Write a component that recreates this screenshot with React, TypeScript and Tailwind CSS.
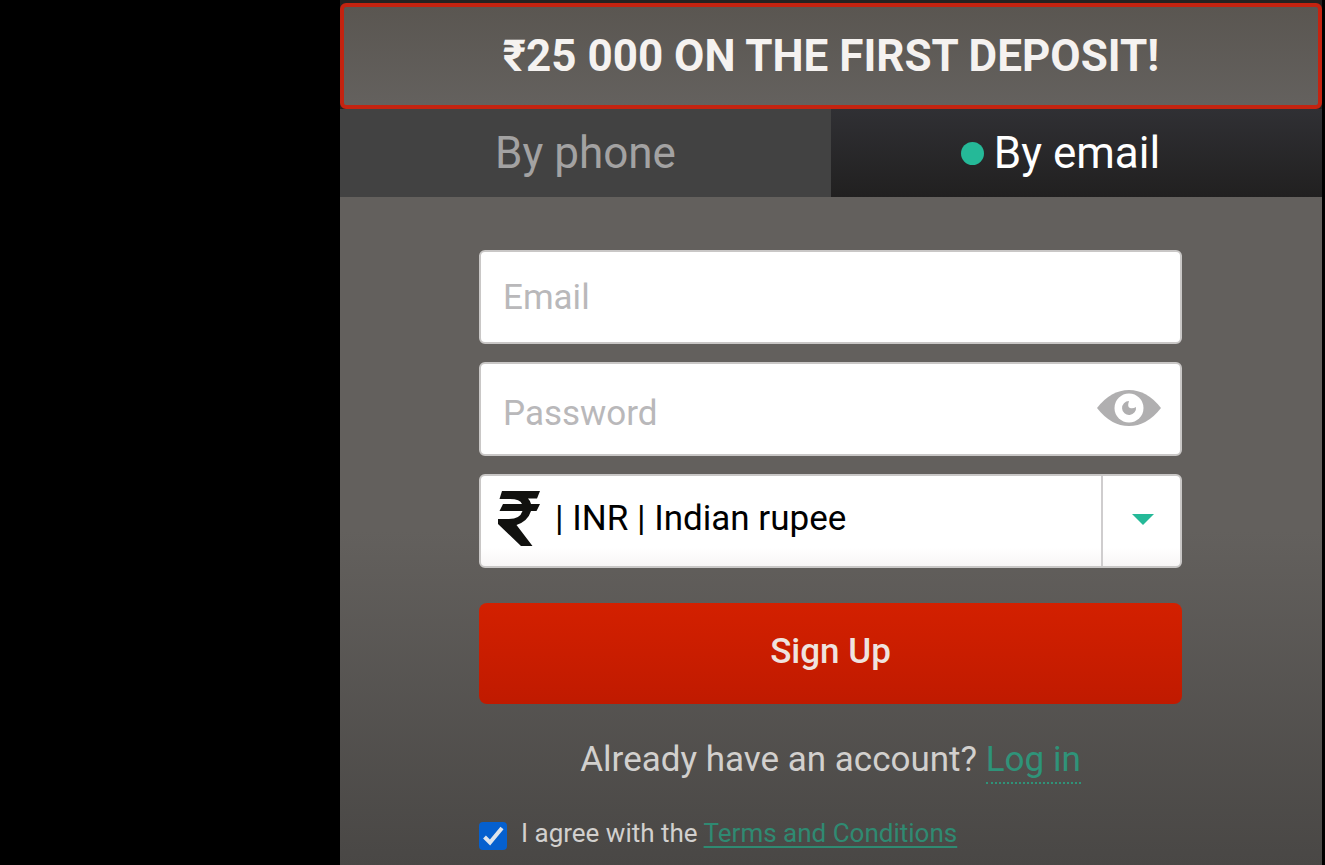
import { useState } from "react";

const fieldBox =
  "h-[94px] w-full rounded-md border-2 border-[#c9c7c6] bg-white text-[35px] text-black outline-none";

function RupeeIcon() {
  return (
    <svg viewBox="0 0 44 56" className="h-14 w-11" fill="#11110f" aria-hidden="true">
      <path d="M5 0H43L40 7.500H31Q33.500 10 34 13H43L39.500 20H34Q31 30 19.500 34L35.500 55H24L1 33V28H12Q23 28 25.500 20H2.500L6 13H25Q23 8 13 8H2.500Z" />
    </svg>
  );
}

function EyeIcon() {
  return (
    <svg viewBox="0 0 64 36" className="h-9 w-16" aria-hidden="true">
      <path d="M0 18Q14 0 32 0T64 18Q50 36 32 36T0 18Z" fill="#b0afb0" />
      <circle cx="32" cy="18" r="14.500" fill="#fff" />
      <path d="M32 11Q30 17 33 18Q36 19 39 17A7 7 0 1 1 32 11Z" fill="#b0afb0" />
    </svg>
  );
}

export default function App() {
  const [visible, setVisible] = useState(false);
  const [agreed, setAgreed] = useState(true);

  return (
    <div className="flex min-h-screen bg-black pl-[340px] pr-[3px] font-['Roboto','Liberation_Sans',sans-serif]">
      <main className="flex min-h-screen flex-1 flex-col bg-[#4a4846]">
        <div className="bg-[#252221] pt-[3px]">
          <h1 className="flex h-[106px] items-center justify-center rounded-md border-4 border-[#c42310] bg-linear-to-b from-[#5a5651] to-[#64615e] text-[44px] font-bold text-[#f5f2f0]">
            ₹25 000 ON THE FIRST DEPOSIT!
          </h1>
        </div>

        <div role="tablist" className="grid grid-cols-2 text-[44px]">
          <button
            role="tab"
            aria-selected="false"
            type="button"
            className="flex h-[88px] items-center justify-center bg-[#424242] text-[#a3a2a2]"
          >
            By phone
          </button>
          <button
            role="tab"
            aria-selected="true"
            type="button"
            className="flex h-[88px] items-center justify-center gap-2.5 bg-linear-to-b from-[#303034] to-[#212020] pr-8 text-white"
          >
            <span className="size-[23px] rounded-full bg-[#25b998]" />
            By email
          </button>
        </div>

        <form
          onSubmit={(e) => e.preventDefault()}
          className="flex flex-1 flex-col bg-linear-to-b from-[#63605d] from-50% to-[#494745] pl-[139px] pr-[140px] pt-[53px]"
        >
          <div className="flex flex-col gap-[18px]">
            <input
              type="email"
              aria-label="Email"
              placeholder="Email"
              className={`${fieldBox} px-[22px] placeholder:text-[#b9b8ba]`}
            />

            <div className="relative">
              <input
                type={visible ? "text" : "password"}
                aria-label="Password"
                placeholder="Password"
                className={`${fieldBox} pl-[22px] pr-24 pt-2 placeholder:text-[#b9b8ba]`}
              />
              <button
                type="button"
                aria-label="Show password"
                onClick={() => setVisible(!visible)}
                className="absolute inset-y-0 right-[21px] flex items-center pb-0.5"
              >
                <EyeIcon />
              </button>
            </div>

            <div className="relative">
              <select
                aria-label="Currency"
                className={`${fieldBox} appearance-none bg-linear-to-b from-white from-80% to-[#f8f6f6] pb-1 pl-[74px] pr-24`}
              >
                <option>| INR | Indian rupee</option>
              </select>
              <span className="pointer-events-none absolute inset-y-0 left-[18px] flex items-center pb-1">
                <RupeeIcon />
              </span>
              <span className="pointer-events-none absolute inset-y-0.5 right-0 flex w-[81px] items-center justify-center border-l-2 border-[#cfcdce] pb-1">
                <svg viewBox="0 0 22 11" className="h-[11px] w-[22px]" fill="#25b998" aria-hidden="true">
                  <path d="M0 0H22L11 11Z" />
                </svg>
              </span>
            </div>
          </div>

          <button
            type="submit"
            className="mt-[35px] h-[101px] rounded-lg bg-linear-to-b from-[#d32000] to-[#c01a00] pb-0.5 text-[35px] font-medium text-[#efe3df]"
          >
            Sign Up
          </button>

          <p className="mt-9 text-center text-[35px] leading-10 text-[#d2d0ce]">
            Already have an account?{" "}
            <a href="#login" className="inline-block border-b-2 border-dotted border-[#2f9379] pb-0.5 text-[#2f9379]">
              Log in
            </a>
          </p>

          <div className="mt-8 flex items-center gap-3.5 pb-4 text-[26px] leading-8 text-[#d2d0ce]">
            <span className="relative mt-1.5 size-7">
              <input
                id="agree"
                type="checkbox"
                checked={agreed}
                onChange={(e) => setAgreed(e.target.checked)}
                className="peer block size-7 appearance-none rounded-sm bg-white checked:bg-[#0560cf]"
              />
              <svg
                viewBox="0 0 28 28"
                className="pointer-events-none absolute inset-0 hidden size-7 peer-checked:block"
                fill="none"
                stroke="#dfe5ec"
                strokeWidth="4"
                aria-hidden="true"
              >
                <path d="M5.500 15L11 20.500L23 6" />
              </svg>
            </span>
            <span>
              <label htmlFor="agree">I agree with the</label>{" "}
              <a href="#terms" className="text-[#2f8a72] underline decoration-2 underline-offset-4">
                Terms and Conditions
              </a>
            </span>
          </div>
        </form>
      </main>
    </div>
  );
}
